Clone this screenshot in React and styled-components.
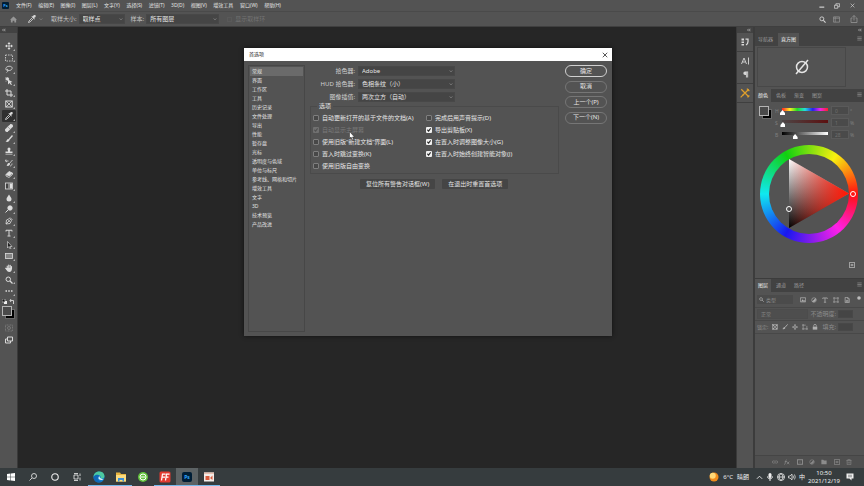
import React, { useState } from "react";
import styled, { createGlobalStyle, css } from "styled-components";

const GlobalStyle = createGlobalStyle`
  * {
    box-sizing: border-box;
  }
  body {
    margin: 0;
    background: #262626;
    color: #e4e4e4;
    font-family: "Noto Sans", "Noto Sans CJK SC", sans-serif;
    font-size: 6px;
    line-height: 8px;
    overflow: hidden;
  }
  button, input, select {
    margin: 0;
    padding: 0;
    border: 0;
    background: none;
    color: inherit;
    font: inherit;
  }
  svg {
    display: block;
    flex: none;
  }
`;

/* ---------- frame ---------- */

const Page = styled.div`
  position: relative;
  display: flex;
  flex-direction: column;
  height: 100vh;
`;

const MenuBar = styled.header`
  display: flex;
  align-items: center;
  height: 11px;
  padding: 0 9px 0 2px;
  background: #535353;
`;

const PsBadge = styled.span`
  width: 7px;
  height: 7px;
  margin-right: 7px;
  border-radius: 1px;
  background: #001e36;
  color: #31a8ff;
  font-size: 4px;
  font-weight: 700;
  line-height: 7px;
  text-align: center;
`;

const Menus = styled.nav`
  display: flex;
  flex: 0 1 265px;
  justify-content: space-between;
`;

const MenuButton = styled.button`
  font-size: 5px;
  line-height: 9px;
  white-space: nowrap;
`;

const WindowButtons = styled.div`
  display: flex;
  gap: 9px;
  margin-left: auto;
`;

const OptionsBar = styled.div`
  display: flex;
  align-items: center;
  height: 16px;
  padding-left: 8px;
  border-top: 1px solid #4a4a4a;
  border-bottom: 1px solid #3f3f3f;
  background: #535353;
`;

const ToolPreset = styled.div`
  display: flex;
  margin-left: 9px;
`;

const OptionLabel = styled.label`
  margin: 0 2px 0 6px;
  color: #c4c4c4;
  white-space: nowrap;
`;

const FadedLabel = styled.label`
  display: flex;
  align-items: center;
  gap: 3px;
  margin-left: 8px;
  color: #727272;
`;

const FaintCheck = styled.input`
  appearance: none;
  width: 5px;
  height: 5px;
  border: 1px solid #595959;
`;

const BarTools = styled.div`
  display: flex;
  margin-left: auto;
`;

const IconButton = styled.button`
  display: flex;
  align-items: center;
  justify-content: center;
  width: ${(props) => props.$w || 10}px;
  height: 10px;
  color: ${(props) => (props.$dim ? "#969696" : "#d8d8d8")};
`;

const SelectWrap = styled.div`
  position: relative;
  width: ${(props) => props.$w};
  svg {
    position: absolute;
    top: 3px;
    right: 2px;
    color: #a8a8a8;
    pointer-events: none;
  }
`;

const SelectBox = styled.select`
  appearance: none;
  display: block;
  width: 100%;
  height: 10px;
  padding: 0 8px 0 3px;
  border: 1px solid ${(props) => (props.disabled ? "#4c4c4c" : "#484848")};
  background: ${(props) => (props.disabled ? "#4e4e4e" : "#454545")};
  color: ${(props) => (props.disabled ? "#848484" : "#e4e4e4")};
  line-height: 8px;
  opacity: 1;
`;

/* ---------- tools ---------- */

const Workspace = styled.div`
  display: flex;
  flex: 1;
  min-height: 0;
`;

const ToolColumn = styled.aside`
  display: flex;
  flex-direction: column;
  align-items: center;
  width: 18px;
  border-right: 1px solid #3a3a3a;
  background: #535353;
`;

const CollapseBar = styled.div`
  display: flex;
  align-items: center;
  justify-content: ${(props) => (props.$end ? "flex-end" : "flex-start")};
  width: 100%;
  height: 6px;
  padding: 0 2px;
  background: #424242;
  color: #b8b8b8;
`;

const ToolList = styled.div`
  display: flex;
  flex-direction: column;
  height: 257px;
  margin-top: 7px;
`;

const ToolButton = styled.button`
  position: relative;
  display: flex;
  flex: 1;
  align-items: center;
  justify-content: center;
  width: 14px;
  border-radius: 1px;
  background: ${(props) => (props.$active ? "#303030" : "transparent")};
  color: #dcdcdc;

  &::after {
    content: "";
    position: absolute;
    right: 1px;
    bottom: 1px;
    border-left: 2px solid transparent;
    border-bottom: 2px solid #b0b0b0;
  }
`;

const MiniRow = styled.div`
  display: flex;
  gap: 2px;
  margin: 2px 0;
`;

const Swatches = styled.div`
  position: relative;
  width: 13px;
  height: 13px;
  flex: none;

  &::before, &::after {
    content: "";
    position: absolute;
    width: 8px;
    height: 8px;
    border: 1px solid #6a6a6a;
  }
  &::before {
    right: 0;
    bottom: 0;
    background: #000;
  }
  &::after {
    left: 0;
    top: 0;
    background: #4a4a4a;
    border-color: #b4b4b4;
  }
`;

const ToolFoot = styled.div`
  display: flex;
  flex-direction: column;
  gap: 2px;
  margin-top: 4px;
`;

const Canvas = styled.main`
  flex: 1;
  background: #262626;
`;

/* ---------- right dock ---------- */

const IconDock = styled.aside`
  width: 19px;
  border-left: 1px solid #3a3a3a;
  border-right: 2px solid #3c3c3c;
  background: #535353;
`;

const DockGroup = styled.div`
  display: flex;
  flex-direction: column;
  align-items: center;
  gap: 3px;
  padding: 4px 0;
  border-bottom: 1px solid #3f3f3f;
  color: #d8d8d8;
`;

const Panels = styled.aside`
  display: flex;
  flex-direction: column;
  width: 109px;
  background: #535353;
`;

const TabBar = styled.div`
  display: flex;
  height: 13px;
  padding-right: 2px;
  background: #424242;
`;

const Tab = styled.button`
  padding: 0 3px;
  font-size: 5px;
  line-height: 13px;
  white-space: nowrap;
  background: ${(props) => (props.$active ? "#535353" : "transparent")};
  color: ${(props) => (props.$active ? "#f0f0f0" : "#9a9a9a")};
`;

const Tabs = styled.div`
  display: flex;
  flex: 1;
  gap: 2px;
`;

const Histogram = styled.div`
  display: flex;
  align-items: center;
  justify-content: center;
  height: 40px;
  margin: 1px 18px 2px 2px;
  border: 1px solid #484848;
`;

const ColorBody = styled.div`
  flex: none;
  height: 177px;
  padding: 4px 9px 0 4px;
  border-bottom: 1px solid #3c3c3c;
`;

const ColorTop = styled.div`
  display: flex;
  gap: 3px;
`;

const Sliders = styled.div`
  flex: 1;
  display: flex;
  flex-direction: column;
  gap: 3px;
`;

const SliderRow = styled.div`
  display: grid;
  grid-template-columns: 4px 1fr 18px 5px;
  align-items: center;
  gap: 1px;
  height: 9px;
  color: #808080;
  font-size: 5px;
`;

const ColorRange = styled.input`
  appearance: none;
  width: 100%;
  min-width: 0;
  height: 9px;
  background: ${(props) => props.$track} no-repeat 2px 2px / calc(100% - 4px) 3px;

  &::-webkit-slider-thumb {
    appearance: none;
    width: 5px;
    height: 5px;
    margin-top: 4px;
    background: #fff;
    clip-path: polygon(50% 0, 100% 60%, 100% 100%, 0 100%, 0 60%);
  }
`;

const NumberBox = styled.input`
  width: ${(props) => props.$w || 18}px;
  height: 9px;
  padding: 0 3px;
  border: 1px solid #5a5a5a;
  background: #4a4a4a;
  color: #707070;
  font-size: 5px;
`;

const Wheel = styled.div`
  display: flex;
  align-items: center;
  justify-content: center;
  position: relative;
  width: 98px;
  height: 98px;
  margin: 6px 0 0 1px;
  border-radius: 50%;
  background: conic-gradient(
    from 90deg,
    #ff1010,
    #ff20e8 50deg,
    #1818f0 120deg,
    #10e8f0 180deg,
    #10d010 240deg,
    #f8f010 305deg,
    #ff1010
  );
`;

const WheelHole = styled.div`
  width: 80px;
  height: 80px;
  border-radius: 50%;
  background: #535353;
`;

const Triangle = styled.div`
  position: absolute;
  left: 29px;
  top: 14px;
  width: 60px;
  height: 69px;
  clip-path: polygon(0 0, 100% 50%, 0 100%);
  background: linear-gradient(90deg, rgba(255, 26, 8, 0), #ff1a08 95%),
    linear-gradient(180deg, #fff, #000);
`;

const Marker = styled.span`
  position: absolute;
  left: ${(props) => props.$x}px;
  top: ${(props) => props.$y}px;
  width: 6px;
  height: 6px;
  border: 1px solid #fff;
  border-radius: 50%;
`;

const ColorCorner = styled.div`
  display: flex;
  justify-content: flex-end;
  margin-top: 19px;
  color: #c8c8c8;
`;

const LayerRow = styled.div`
  display: flex;
  align-items: center;
  justify-content: space-between;
  height: ${(props) => props.$h}px;
  padding: 0 3px 0 2px;
  border-bottom: 1px solid #484848;
  color: #8c8c8c;
  font-size: 5px;
`;

const IconSet = styled.div`
  display: flex;
  gap: ${(props) => props.$gap}px;
  color: #b0b0b0;
`;

const SearchBox = styled.label`
  display: flex;
  align-items: center;
  gap: 2px;
  width: 36px;
  height: 9px;
  padding-left: 2px;
  background: #4b4b4b;
  color: #b4b4b4;

  input {
    width: 24px;
    line-height: 8px;
  }
  input::placeholder {
    color: #8c8c8c;
    opacity: 1;
  }
`;

const Field = styled.label`
  display: flex;
  align-items: center;
  gap: 2px;
  padding-right: 8px;
  font-size: 6px;
  white-space: nowrap;

  input {
    height: 8px;
    border-color: #484848;
    background: #454545;
  }
`;

const LayerFoot = styled.footer`
  display: flex;
  align-items: center;
  justify-content: space-between;
  height: 13px;
  margin-top: auto;
  padding: 0 12px 0 17px;
  background: #4f4f4f;
  border-top: 1px solid #454545;
  color: #8c8c8c;
`;

/* ---------- preferences dialog ---------- */

const Dialog = styled.section`
  position: absolute;
  left: 244px;
  top: 48px;
  display: flex;
  flex-direction: column;
  width: 368px;
  background: #535353;
  box-shadow: 0 0 4px #111;
`;

const TitleBar = styled.header`
  display: flex;
  align-items: center;
  justify-content: space-between;
  height: 13px;
  padding: 0 4px 0 5px;
  background: #fff;
  color: #222;

  h1 {
    margin: 0;
    font-size: 5px;
    font-weight: 400;
    line-height: 13px;
  }
  button {
    color: #222;
  }
`;

const DialogBody = styled.div`
  display: flex;
  padding: 4px 5px 4px 4px;
`;

const CategoryList = styled.nav`
  display: flex;
  flex-direction: column;
  width: 57px;
  height: 267px;
  padding: 1px;
  border: 1px solid #474747;
`;

const Category = styled.button`
  height: 9px;
  padding-left: 2px;
  font-size: 5px;
  line-height: 9px;
  text-align: left;
  white-space: nowrap;
  background: ${(props) => (props.$active ? "#6a6a6a" : "transparent")};
`;

const Settings = styled.div`
  flex: 1;
  padding-left: 5px;
`;

const PickerGrid = styled.div`
  display: grid;
  grid-template-columns: 45px 97px;
  gap: 2px 3px;
  grid-auto-rows: 11px;
  align-items: center;

  label {
    color: #d0d0d0;
    text-align: right;
    white-space: nowrap;
  }
`;

const OptionSet = styled.fieldset`
  display: grid;
  grid-template-columns: 113px 1fr;
  grid-auto-rows: 12px;
  align-items: center;
  min-width: 0;
  margin: 0 0 5px;
  padding: 2px 2px 1px;
  border: 1px solid #4a4a4a;

  legend {
    margin-left: 4px;
    padding: 0 2px;
    color: #e4e4e4;
  }
`;

const CheckLabel = styled.label`
  display: flex;
  align-items: center;
  gap: 3px;
  white-space: nowrap;
  grid-column: ${(props) => props.$col};
  color: ${(props) => (props.$off ? "#7a7a7a" : "#e8e8e8")};
`;

const Check = styled.input`
  appearance: none;
  display: flex;
  align-items: center;
  justify-content: center;
  width: 6px;
  height: 6px;
  border: 1px solid #7e7e7e;
  border-radius: 1px;
  background: #484848;

  ${(props) =>
    props.checked &&
    css`
      border: 0;
      background: ${props.disabled ? "#707070" : "#f0f0f0"};

      &::after {
        content: "";
        width: 4px;
        height: 4px;
        background: ${props.disabled ? "#505050" : "#202020"};
        clip-path: polygon(0 55%, 20% 30%, 40% 55%, 80% 0, 100% 20%, 42% 100%);
      }
    `}
`;

const ResetRow = styled.div`
  display: flex;
  gap: 7px;
  padding-left: 50px;
`;

const FlatButton = styled.button`
  height: 10px;
  padding: 0 6px;
  border-radius: 1px;
  background: #454545;
  line-height: 10px;
  white-space: nowrap;
`;

const ActionColumn = styled.div`
  display: flex;
  flex-direction: column;
  justify-content: space-between;
  width: 42px;
  height: 59px;
  margin-left: 6px;
`;

const PillButton = styled.button`
  height: 12px;
  border: 1px solid ${(props) => (props.$primary ? "#d0d0d0" : "#767676")};
  border-radius: 6px;
  line-height: 9px;
  white-space: nowrap;
`;

const Pointer = styled.svg`
  position: absolute;
  left: 349px;
  top: 131px;
`;

/* ---------- taskbar ---------- */

const Taskbar = styled.footer`
  display: flex;
  align-items: stretch;
  height: 18px;
  background: #363c3e;
  color: #f0f0f0;
`;

const TaskButton = styled.button`
  display: flex;
  align-items: center;
  justify-content: center;
  width: 22px;
  border-bottom: 1px solid ${(props) => (props.$open ? "#76b9ed" : "transparent")};
  background: ${(props) => (props.$active ? "#5c6264" : "transparent")};
`;

const Tray = styled.div`
  display: flex;
  align-items: center;
  gap: 3px;
  margin-left: auto;
  padding-right: 10px;
`;

const Weather = styled.span`
  display: flex;
  align-items: center;
  gap: 4px;
  margin-right: 4px;
  white-space: nowrap;
`;

const Clock = styled.time`
  margin-right: 3px;
  text-align: center;
`;

/* ---------- icons, all on a 16 unit grid ---------- */

const Icon = ({ size = 9, w = 1.6, children }) => (
  <svg
    width={size}
    height={size}
    viewBox="0 0 16 16"
    fill="none"
    stroke="currentColor"
    strokeWidth={w}
    aria-hidden="true"
  >
    {children}
  </svg>
);

const glyphs = {
  move: (
    <>
      <path d="M8 2v12M2 8h12" />
      <path d="M8 0l3 4H5zM8 16l3-4H5zM0 8l4-3v6zM16 8l-4-3v6z" fill="currentColor" stroke="none" />
    </>
  ),
  marquee: <rect x="1" y="2" width="14" height="12" strokeDasharray="3 2" />,
  lasso: <path d="M4 11C0 9 1 3 8 2.500c7-.5 8 5 4 7.500-3 1.500-7 1.500-8 0-1-2 2-2 2 0s-1 4-3 5" />,
  select: (
    <>
      <path d="M1 2h6M2 1v8" strokeDasharray="2 1.500" />
      <path d="M6 5l9 5-4 1 3 4-2 1-3-4-3 3z" fill="currentColor" stroke="none" />
      <circle cx="5" cy="4" r="2.500" fill="currentColor" />
    </>
  ),
  crop: <path d="M4 0v12h12M0 4h12v12" strokeWidth="2" />,
  frame: (
    <>
      <rect x="1.500" y="2" width="13" height="12" strokeWidth="2" />
      <path d="M2 2l12 12M14 2L2 14" />
    </>
  ),
  dropper: (
    <>
      <path d="M9 5L2 12l-1 3 3-1 7-7" />
      <path d="M7 3l6 6 1-1-2-2c4-1 5-6 1-6-3 0-3 3-3 3L8 2z" fill="currentColor" stroke="none" />
    </>
  ),
  heal: (
    <>
      <path d="M10 1.500L1.500 10a3 3 0 0 0 4.500 4.500L14.500 6A3 3 0 0 0 10 1.500z" fill="currentColor" />
      <path d="M6 6l4 4" stroke="#535353" strokeDasharray="1.500 1.500" />
    </>
  ),
  brush: (
    <>
      <path d="M15 1L8 9" strokeWidth="2.500" />
      <path d="M7 8c-3-.5-3 4-6 5 4 2 8 0 8-3z" fill="currentColor" stroke="none" />
    </>
  ),
  stamp: <path d="M5 4a3 3 0 1 1 6 0c0 2-1 2-1 5h5v3H1V9h5c0-3-1-3-1-5zM1 13.500h14V15H1z" fill="currentColor" stroke="none" />,
  history: (
    <>
      <path d="M15 2L8 10M1 4h6M2 1L1 4l3 2M14 9c0 3-2 5-4 5" />
      <path d="M8 8c-3-.5-3 4-5 5 3 2 7 0 7-3z" fill="currentColor" stroke="none" />
    </>
  ),
  eraser: (
    <>
      <path d="M8 3l7 3-6 6-7-3z" fill="currentColor" />
      <path d="M2 9v3l6 3 7-6V6" />
    </>
  ),
  gradient: (
    <>
      <path d="M2 3h4v10H2z" fill="#444" stroke="none" />
      <path d="M6 3h4v10H6z" fill="#888" stroke="none" />
      <path d="M10 3h4v10h-4z" fill="#e0e0e0" stroke="none" />
      <rect x="1" y="2" width="14" height="12" />
    </>
  ),
  blur: <path d="M8 1c2 4 5 6 5 9a5 5 0 0 1-10 0c0-3 3-5 5-9z" fill="currentColor" stroke="none" />,
  dodge: (
    <>
      <circle cx="10" cy="6" r="4.500" fill="currentColor" />
      <path d="M7 9l-6 6" strokeWidth="2" />
    </>
  ),
  pen: (
    <>
      <path d="M2 14l1-8 6-3 4 4-3 6zM2 14l5-5M10 1l5 5" />
      <circle cx="8" cy="8" r="1" fill="currentColor" />
    </>
  ),
  type: <path d="M2 5V2.500h12V5M8 2.500v11M5 14h6" strokeWidth="2" />,
  path: <path d="M5 1v13l3-3 2 5 2-1-2-4h4z" fill="#222" strokeWidth="1.300" />,
  rect: <rect x="1" y="3" width="14" height="10" fill="#858585" />,
  hand: (
    <>
      <path d="M4.500 9V4M7.500 8V2M10.500 8V2.500M13 9V5M5 12L1.500 8.500" strokeWidth="2.200" strokeLinecap="round" />
      <path d="M3.500 8h10.500c0 5-2 8-5.500 8-3 0-5-2-6-6z" fill="currentColor" stroke="none" />
    </>
  ),
  zoom: (
    <>
      <circle cx="6.500" cy="6.500" r="4.500" strokeWidth="2" />
      <path d="M10 10l5 5" strokeWidth="2.500" />
    </>
  ),
  more: <path d="M1 8h3M6.500 8h3M12 8h3" strokeWidth="3" />,
  mask: (
    <>
      <rect x="1" y="2" width="14" height="12" strokeDasharray="2 1" />
      <circle cx="8" cy="8" r="3" />
    </>
  ),
  screen: <path d="M5 2h10v8H5zM5 6H1v8h10v-4" strokeWidth="2" />,
  home: <path d="M8 1L0 8.500h2V15h4v-4h4v4h4V8.500h2z" fill="currentColor" stroke="none" />,
  down: <path d="M3 6l5 5 5-5" strokeWidth="2.500" />,
  up: <path d="M2 11l6-6 6 6" strokeWidth="2" />,
  chevrons: <path d="M7 3L2 8l5 5M14 3L9 8l5 5" strokeWidth="3" />,
  burger: <path d="M1 3h14M1 8h14M1 13h14" strokeWidth="2" />,
  min: <path d="M1 11h13" strokeWidth="3" />,
  restore: <path d="M1 6h9v8H1zM5 6V2h10v8h-5" strokeWidth="2" />,
  close: <path d="M2 2l12 12M14 2L2 14" strokeWidth="2" />,
  layout: <path d="M1 2h14v12H1zM5 2v12M1 5h14" />,
  share: <path d="M5 6H2v9h12V6h-3M8 11V1M5 4l3-3 3 3" />,
  actions: (
    <>
      <path d="M1 1h5v4H1zM1 7h5v3H1zM1 12h5v3H1z" fill="currentColor" stroke="none" />
      <path d="M9 2h5v5q0 5-4 7" strokeWidth="2.500" />
    </>
  ),
  character: <path d="M1 14L6 2l5 12M3 10h6M15 1v14" strokeWidth="1.800" />,
  paragraph: <path d="M14 1H7a4 4 0 0 0 0 8h2v6h2V3h1v12h2z" fill="currentColor" stroke="none" />,
  cross: (
    <g stroke="#e0a02c" strokeWidth="2">
      <path d="M2 2l12 12M14 2L4 12" />
      <path d="M1 15l4-4M11 1l4 4M12 15l3-3" />
    </g>
  ),
  empty: (
    <>
      <circle cx="8" cy="8" r="5.500" />
      <path d="M14 1L2 15" />
    </>
  ),
  plusbox: <path d="M1 1h14v14H1zM4 8h8M8 5v6" strokeWidth="2" />,
  image: (
    <>
      <path d="M1 2h14v11H1z" strokeWidth="2" />
      <path d="M3 12l4-6 3 4 2-2 2 4z" fill="currentColor" stroke="none" />
    </>
  ),
  adjust: (
    <>
      <circle cx="8" cy="8" r="6" />
      <path d="M12 4a6 6 0 0 1-8 8z" fill="currentColor" />
    </>
  ),
  shape: <path d="M3 3h10v10H3zM0 3h3V0M13 0v3h3M16 13h-3v3M3 16v-3H0" />,
  smart: <path d="M3 1h7l4 4v10H3zM6 9h5v4H6zM10 1v4h4" strokeWidth="2" />,
  checker: (
    <>
      <rect x="1" y="1" width="14" height="14" />
      <path d="M2 2h4v4H2zM10 2h4v4h-4zM6 6h4v4H6zM2 10h4v4H2zM10 10h4v4h-4z" fill="currentColor" stroke="none" />
    </>
  ),
  artboard: <path d="M3 0v16M0 3h10M13 5v11M0 13h16" />,
  lock: (
    <>
      <path d="M2 7h12v8H2z" fill="currentColor" stroke="none" />
      <path d="M4.500 7V4.500a3.500 3.500 0 0 1 7 0V7" strokeWidth="2" />
    </>
  ),
  link: <path d="M7 5H4a3 3 0 0 0 0 6h3M9 5h3a3 3 0 0 1 0 6H9M5 8h6" />,
  fx: <path d="M1 15c3 0 2-13 6-13M2 7h6M8 7l6 7M14 7l-6 7" strokeWidth="2" />,
  maskLayer: (
    <>
      <path d="M1 2h14v12H1z" strokeWidth="3" />
      <circle cx="8" cy="8" r="1.500" fill="currentColor" stroke="none" />
    </>
  ),
  folder: <path d="M1 2h5l2 2h7v10H1z" fill="currentColor" stroke="none" />,
  trash: <path d="M1 4h14M5 4V1h6v3M3 4v11h10V4M6 7v5M10 7v5" />,
  taskview: <path d="M2 4h8v8H2zM2 1h8M2 15h8M14 1v5M14 9v6" />,
  mic: (
    <>
      <rect x="5" y="0" width="6" height="10" rx="3" fill="currentColor" stroke="none" />
      <path d="M3 7c0 6 10 6 10 0M8 12v4" strokeWidth="2" />
    </>
  ),
  globe: (
    <>
      <circle cx="8" cy="8" r="7" />
      <path d="M1 8h14M8 1c-5 4-5 10 0 14M8 1c5 4 5 10 0 14" />
    </>
  ),
  speaker: <path d="M1 6h3l4-4v12l-4-4H1zM10 5q2 3 0 6M13 3q3 5 0 10" strokeWidth="1.400" />,
  note: (
    <>
      <path d="M1 1h14v10h-4v4l-4-4H1z" fill="currentColor" stroke="none" />
      <path d="M4 4.500h8M4 7.500h8" stroke="#363c3e" strokeWidth="1" />
    </>
  ),
};

const G = ({ name, size, w }) => (
  <Icon size={size} w={w}>
    {glyphs[name]}
  </Icon>
);

const menus = [
  "文件(F)", "编辑(E)", "图像(I)", "图层(L)", "文字(Y)", "选择(S)",
  "滤镜(T)", "3D(D)", "视图(V)", "增效工具", "窗口(W)", "帮助(H)",
];

const tools = [
  "move", "marquee", "lasso", "select", "crop", "frame", "dropper", "heal",
  "brush", "stamp", "history", "eraser", "gradient", "blur", "dodge", "pen",
  "type", "path", "rect", "hand", "zoom", "more",
];

const categories = [
  "常规", "界面", "工作区", "工具", "历史记录", "文件处理", "导出", "性能",
  "暂存盘", "光标", "透明度与色域", "单位与标尺", "参考线、网格和切片",
  "增效工具", "文字", "3D", "技术预览", "产品改进",
];

const initialChecks = [
  { label: "自动更新打开的基于文件的文档(A)", col: 1 },
  { label: "完成后用声音提示(D)", col: 2 },
  { label: "自动显示主屏幕", col: 1, on: true, off: true },
  { label: "导出剪贴板(X)", col: 2, on: true },
  { label: "使用旧版“新建文档”界面(L)", col: 1 },
  { label: "在置入时调整图像大小(G)", col: 2, on: true },
  { label: "置入时跳过变换(K)", col: 1 },
  { label: "在置入时始终创建智能对象(J)", col: 2, on: true },
  { label: "使用旧版自由变换", col: 1 },
];

const hue =
  "linear-gradient(90deg, #f22, #fe2 17%, #2d2 33%, #2dd 50%, #22e 67%, #e2e 83%, #f22)";

const channels = [
  { name: "H", unit: "°", max: 360, value: 0, track: hue },
  { name: "S", unit: "%", max: 100, value: 1, track: "linear-gradient(90deg, #4c4646, #5c1010)" },
  { name: "B", unit: "%", max: 100, value: 28, track: "linear-gradient(90deg, #000, #fff)" },
];

const Select = ({ id, label, value, width, disabled }) => (
  <SelectWrap $w={width}>
    <SelectBox id={id} aria-label={label} disabled={disabled} defaultValue={value}>
      <option>{value}</option>
    </SelectBox>
    {!disabled && <G name="down" size={4} />}
  </SelectWrap>
);

const PanelTabs = ({ items, active }) => (
  <TabBar>
    <Tabs>
      {items.map((item) => (
        <Tab key={item} $active={item === active}>
          {item}
        </Tab>
      ))}
    </Tabs>
    <IconButton $w={5} $dim aria-label="面板菜单">
      <G name="burger" size={5} />
    </IconButton>
  </TabBar>
);

const Header = () => (
  <>
    <MenuBar>
      <PsBadge>Ps</PsBadge>
      <Menus>
        {menus.map((item) => (
          <MenuButton key={item}>{item}</MenuButton>
        ))}
      </Menus>
      <WindowButtons>
        <IconButton $w={6} aria-label="最小化"><G name="min" size={6} /></IconButton>
        <IconButton $w={6} aria-label="还原"><G name="restore" size={6} /></IconButton>
        <IconButton $w={6} aria-label="关闭"><G name="close" size={5} /></IconButton>
      </WindowButtons>
    </MenuBar>
    <OptionsBar>
      <IconButton aria-label="主页" $dim><G name="home" size={7} /></IconButton>
      <ToolPreset>
        <IconButton aria-label="吸管"><G name="dropper" size={8} /></IconButton>
        <IconButton $w={8} $dim aria-label="预设"><G name="down" size={4} /></IconButton>
      </ToolPreset>
      <OptionLabel htmlFor="sample-size">取样大小:</OptionLabel>
      <Select id="sample-size" value="取样点" width="46px" />
      <OptionLabel htmlFor="sample">样本:</OptionLabel>
      <Select id="sample" value="所有图层" width="73px" />
      <FadedLabel>
        <FaintCheck type="checkbox" disabled />
        显示取样环
      </FadedLabel>
      <BarTools>
        <IconButton $w={12} aria-label="搜索"><G name="zoom" size={7} /></IconButton>
        <IconButton $w={16} $dim aria-label="工作区"><G name="layout" size={7} /></IconButton>
        <IconButton $w={20} $dim aria-label="共享"><G name="share" size={8} /></IconButton>
      </BarTools>
    </OptionsBar>
  </>
);

const Toolbar = () => (
  <ToolColumn>
    <CollapseBar>
      <G name="chevrons" size={4} />
    </CollapseBar>
    <ToolList>
      {tools.map((name) => (
        <ToolButton key={name} aria-label={name} $active={name === "dropper"}>
          <G name={name} size={8} />
        </ToolButton>
      ))}
    </ToolList>
    <MiniRow>
      <svg width="5" height="5" viewBox="0 0 5 5">
        <path d="M2 2h3v3H2z" fill="#eee" />
        <path d="M0 0h3v3H0z" fill="#111" stroke="#ddd" strokeWidth=".6" />
      </svg>
      <svg width="6" height="5" viewBox="0 0 6 5" fill="none" stroke="#ccc">
        <path d="M2 0L1 1.500 2 3M1 1.500h3.500V5" />
      </svg>
    </MiniRow>
    <Swatches />
    <ToolFoot>
      <IconButton aria-label="快速蒙版" $dim><G name="mask" size={8} w={1} /></IconButton>
      <IconButton aria-label="屏幕模式"><G name="screen" size={8} /></IconButton>
    </ToolFoot>
  </ToolColumn>
);

const ColorPanel = () => (
  <ColorBody>
    <ColorTop>
      <Swatches />
      <Sliders>
        {channels.map((c) => (
          <SliderRow key={c.name}>
            <label htmlFor={`range-${c.name}`}>{c.name}</label>
            <ColorRange
              id={`range-${c.name}`}
              type="range"
              max={c.max}
              defaultValue={c.value}
              $track={c.track}
            />
            <NumberBox aria-label={c.name} defaultValue={c.value} />
            <span>{c.unit}</span>
          </SliderRow>
        ))}
      </Sliders>
    </ColorTop>
    <Wheel>
      <WheelHole />
      <Triangle />
      <Marker $x={90} $y={46} />
      <Marker $x={26} $y={61} />
    </Wheel>
    <ColorCorner>
      <G name="plusbox" size={6} />
    </ColorCorner>
  </ColorBody>
);

const LayersPanel = () => (
  <>
    <PanelTabs items={["图层", "通道", "路径"]} active="图层" />
    <LayerRow $h={16}>
      <SearchBox>
        <G name="zoom" size={5} />
        <input aria-label="类型" placeholder="类型" />
      </SearchBox>
      <IconSet $gap={5}>
        {["image", "adjust", "type", "shape", "smart"].map((n) => (
          <G key={n} name={n} size={6} />
        ))}
      </IconSet>
      <svg width="4" height="8"><circle cx="2" cy="2" r="1.800" fill="#bbb" /></svg>
    </LayerRow>
    <LayerRow $h={13}>
      <Select label="混合模式" value="正常" width="51px" disabled />
      <Field>
        不透明度:
        <NumberBox $w={15} disabled />
      </Field>
    </LayerRow>
    <LayerRow $h={13}>
      <span>锁定:</span>
      <IconSet $gap={4}>
        {["checker", "brush", "move", "artboard", "lock"].map((n) => (
          <G key={n} name={n} size={6} />
        ))}
      </IconSet>
      <Field>
        填充:
        <NumberBox $w={15} disabled />
      </Field>
    </LayerRow>
    <LayerFoot>
      {["link", "fx", "maskLayer", "adjust", "folder", "plusbox", "trash"].map((n) => (
        <G key={n} name={n} size={6} />
      ))}
    </LayerFoot>
  </>
);

const RightDock = () => (
  <>
    <IconDock>
      <CollapseBar $end><G name="chevrons" size={4} /></CollapseBar>
      <DockGroup>
        <IconButton aria-label="历史记录"><G name="actions" size={8} /></IconButton>
      </DockGroup>
      <DockGroup>
        <IconButton aria-label="字符"><G name="character" size={8} /></IconButton>
        <IconButton aria-label="段落"><G name="paragraph" size={7} /></IconButton>
      </DockGroup>
      <DockGroup>
        <IconButton aria-label="工具预设"><G name="cross" size={10} /></IconButton>
      </DockGroup>
    </IconDock>
    <Panels>
      <CollapseBar $end><G name="chevrons" size={4} /></CollapseBar>
      <PanelTabs items={["导航器", "直方图"]} active="直方图" />
      <Histogram>
        <G name="empty" size={16} w={1.500} />
      </Histogram>
      <PanelTabs items={["颜色", "色板", "渐变", "图案"]} active="颜色" />
      <ColorPanel />
      <LayersPanel />
    </Panels>
  </>
);

const Preferences = () => {
  const [checks, setChecks] = useState(initialChecks);
  const [category, setCategory] = useState("常规");

  const toggle = (index) =>
    setChecks(checks.map((c, i) => (i === index ? { ...c, on: !c.on } : c)));

  return (
    <Dialog role="dialog" aria-labelledby="dialog-title">
      <TitleBar>
        <h1 id="dialog-title">首选项</h1>
        <button aria-label="关闭"><G name="close" size={6} w={1.500} /></button>
      </TitleBar>
      <DialogBody>
        <CategoryList>
          {categories.map((name) => (
            <Category key={name} $active={name === category} onClick={() => setCategory(name)}>
              {name}
            </Category>
          ))}
        </CategoryList>
        <Settings>
          <PickerGrid>
            <label htmlFor="picker">拾色器:</label>
            <Select id="picker" value="Adobe" width="100%" />
            <label htmlFor="hud">HUD 拾色器:</label>
            <Select id="hud" value="色相条纹（小）" width="100%" />
            <label htmlFor="interpolation">图像插值:</label>
            <Select id="interpolation" value="两次立方（自动）" width="100%" />
          </PickerGrid>
          <OptionSet>
            <legend>选项</legend>
            {checks.map((c, i) => (
              <CheckLabel key={c.label} $col={c.col} $off={c.off}>
                <Check
                  type="checkbox"
                  checked={!!c.on}
                  disabled={c.off}
                  onChange={() => toggle(i)}
                />
                {c.label}
              </CheckLabel>
            ))}
          </OptionSet>
          <ResetRow>
            <FlatButton>复位所有警告对话框(W)</FlatButton>
            <FlatButton>在退出时重置首选项</FlatButton>
          </ResetRow>
        </Settings>
        <ActionColumn>
          <PillButton $primary>确定</PillButton>
          <PillButton>取消</PillButton>
          <PillButton>上一个(P)</PillButton>
          <PillButton>下一个(N)</PillButton>
        </ActionColumn>
      </DialogBody>
    </Dialog>
  );
};

const AppIcon = ({ children }) => (
  <svg width="12" height="12" viewBox="0 0 24 24" aria-hidden="true">
    {children}
  </svg>
);

const TaskPs = styled.span`
  width: 10px;
  height: 10px;
  border-radius: 2px;
  background: #001e36;
  color: #31a8ff;
  font-size: 5px;
  font-weight: 700;
  line-height: 10px;
`;

const Bottom = () => (
  <Taskbar>
    <TaskButton aria-label="开始">
      <AppIcon>
        <path d="M4 6l7-1v6.500H4zM12 5l8-1v7.500h-8zM4 12.500h7V19l-7-1zM12 12.500h8V20l-8-1z" fill="#fff" />
      </AppIcon>
    </TaskButton>
    <TaskButton aria-label="搜索">
      <Icon size={8}><circle cx="10" cy="6" r="5" /><path d="M6 10l-5 5" /></Icon>
    </TaskButton>
    <TaskButton aria-label="Cortana">
      <Icon size={8} w={2.200}><circle cx="8" cy="8" r="6.500" /></Icon>
    </TaskButton>
    <TaskButton aria-label="任务视图"><G name="taskview" size={8} /></TaskButton>
    <TaskButton $open aria-label="Edge">
      <AppIcon>
        <circle cx="12" cy="12" r="11" fill="#1680d0" />
        <path d="M1 12C2-2 22-2 23 10c0 6-7 6-8 4 3-6-8-9-14-2z" fill="#4cc9a0" />
        <path d="M1 12c4-7 12-4 12-2-5 1-5 11 5 11C8 26 1 20 1 12z" fill="#1068b8" />
        <path d="M13 10c-5 5 0 10 8 7-2-1-9-2-8-7z" fill="#e8f4f8" />
      </AppIcon>
    </TaskButton>
    <TaskButton $open aria-label="文件资源管理器">
      <AppIcon>
        <path d="M2 3h8l2 3h10v15H2z" fill="#e8b440" />
        <path d="M2 8h20v13H2z" fill="#fbdc80" />
        <path d="M6 14h12v7h-3v-3H9v3H6z" fill="#3c90d8" />
      </AppIcon>
    </TaskButton>
    <TaskButton aria-label="浏览器">
      <AppIcon>
        <circle cx="12" cy="12" r="10" fill="#62c43c" />
        <circle cx="12" cy="12" r="6" fill="none" stroke="#fff" strokeWidth="2" />
        <path d="M8 12h8" stroke="#fff" strokeWidth="2" />
      </AppIcon>
    </TaskButton>
    <TaskButton $open aria-label="格式工厂">
      <AppIcon>
        <rect x="1" y="1" width="22" height="22" rx="3" fill="#e23a30" />
        <path d="M5 19l2-13h6M6 12h6M13 19l2-13h6M14 12h5" fill="none" stroke="#fff" strokeWidth="2.500" />
      </AppIcon>
    </TaskButton>
    <TaskButton $open $active aria-label="Photoshop"><TaskPs>Ps</TaskPs></TaskButton>
    <TaskButton $open aria-label="录屏">
      <AppIcon>
        <path d="M2 3h20v18H2z" fill="#f4ece8" />
        <path d="M5 10h8v8H5zM14 14l5-5v9z" fill="#d85a3c" />
        <path d="M2 3h20v3H2z" fill="#e8c0b0" />
      </AppIcon>
    </TaskButton>
    <Tray>
      <Weather>
        <svg width="10" height="10" viewBox="0 0 20 20">
          <circle cx="10" cy="10" r="9" fill="#f08c1c" />
          <circle cx="7.500" cy="7.500" r="6" fill="#ffd978" />
        </svg>
        <span>6°C</span>
        <span>晴朗</span>
      </Weather>
      <G name="up" size={7} />
      <G name="mic" size={8} />
      <G name="globe" size={8} />
      <G name="speaker" size={8} />
      <span>中</span>
      <Clock>
        10:50
        <br />
        2021/12/19
      </Clock>
      <G name="note" size={8} />
    </Tray>
  </Taskbar>
);

export default () => (
  <Page>
    <GlobalStyle />
    <Header />
    <Workspace>
      <Toolbar />
      <Canvas />
      <RightDock />
    </Workspace>
    <Bottom />
    <Preferences />
    <Pointer width="6" height="9" viewBox="0 0 12 18">
      <path d="M1 1v14l3-3 3 6 2-1-2-5h4z" fill="#fff" stroke="#222" />
    </Pointer>
  </Page>
);
